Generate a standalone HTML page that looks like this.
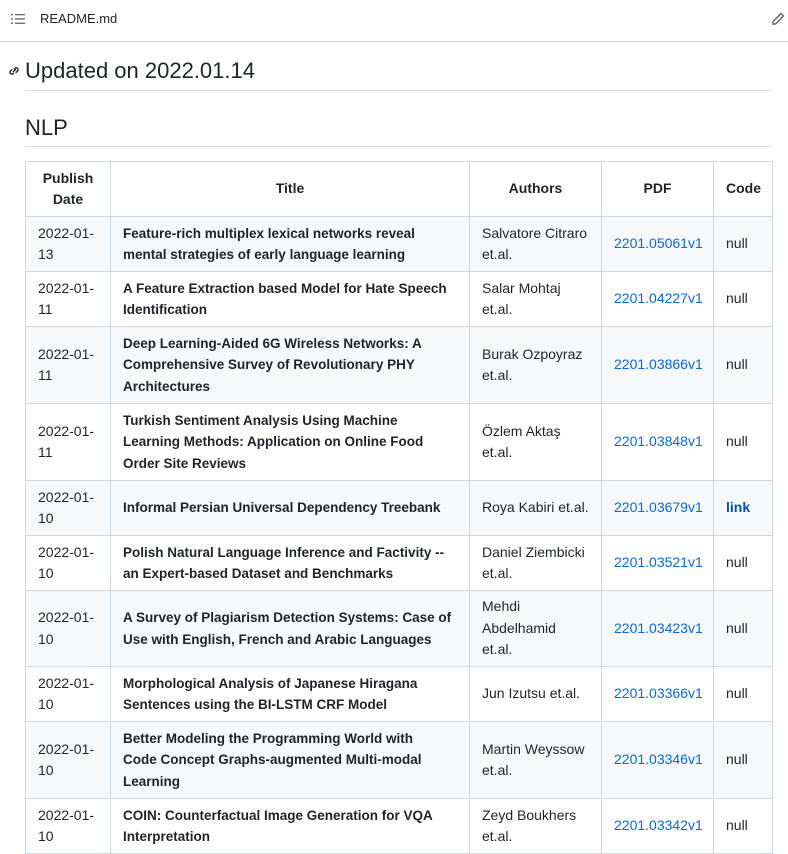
<!DOCTYPE html>
<html><head><meta charset="utf-8"><style>
body{margin:0;background:#fff;font-family:"Liberation Sans",sans-serif;color:#1f2328;width:788px;height:850px;overflow:hidden;position:relative}
.top{height:41px;border-bottom:1px solid #d0d7de;position:relative}
.top .name{position:absolute;left:40px;top:11px;font-size:13px}
.top .ic{position:absolute;left:11px;top:13px}
.top .pen{position:absolute;right:2px;top:11px}
h2{position:absolute;left:25px;top:56px;margin:0;font-size:22px;font-weight:400;width:747px;border-bottom:1px solid #d8dee4;height:34px;line-height:30px}
.lk{position:absolute;left:7px;top:64px}
h3{position:absolute;left:25px;top:113px;margin:0;font-size:22px;font-weight:400;width:747px;border-bottom:1px solid #d8dee4;height:33px;line-height:30px}
table{position:absolute;left:25px;top:161px;border-collapse:collapse;table-layout:fixed;font-size:14px;line-height:21.5px;width:747px}
td,th{border:1px solid #d0d7de;padding:0 12px;vertical-align:middle}
th{font-weight:600;text-align:center}
td:nth-child(2){font-weight:600;font-size:13.5px}
td:nth-child(4){text-align:center}
tr:nth-child(even) td{background:#f6f8fa}
a{color:#0969da;text-decoration:none}
</style></head><body>
<div class="top"><svg class="ic" width="14" height="12" viewBox="0 0 14 12" fill="#59636e"><rect x="0" y="1" width="2" height="1.3"/><rect x="4" y="1" width="10" height="1.3"/><rect x="0" y="5.3" width="2" height="1.3"/><rect x="4" y="5.3" width="10" height="1.3"/><rect x="0" y="9.6" width="2" height="1.3"/><rect x="4" y="9.6" width="10" height="1.3"/></svg><span class="name">README.md</span>
<svg class="pen" width="16" height="16" viewBox="0 0 16 16" fill="none" stroke="#59636e" stroke-width="1.4"><path d="M11 2.5l2.5 2.5L5.5 13H3v-2.5z"/></svg></div>
<svg class="lk" width="14" height="14" viewBox="0 0 16 16" fill="none" stroke="#1f2328" stroke-width="1.6"><path d="M7 9l3-3M6 6L4 8a2 2 0 003 3l1-1M10 10l2-2a2 2 0 00-3-3l-1 1"/></svg>
<h2>Updated on 2022.01.14</h2>
<h3>NLP</h3>
<table>
<colgroup><col style="width:85px"><col style="width:359px"><col style="width:132px"><col style="width:112px"><col style="width:59px"></colgroup>
<tr style="height:55px"><th>Publish Date</th><th>Title</th><th>Authors</th><th>PDF</th><th>Code</th></tr>
<tr style="height:55px"><td>2022-01-13</td><td>Feature-rich multiplex lexical networks reveal mental strategies of early language learning</td><td>Salvatore Citraro et.al.</td><td><a>2201.05061v1</a></td><td>null</td></tr>
<tr style="height:55px"><td>2022-01-11</td><td>A Feature Extraction based Model for Hate Speech Identification</td><td>Salar Mohtaj et.al.</td><td><a>2201.04227v1</a></td><td>null</td></tr>
<tr style="height:77px"><td>2022-01-11</td><td>Deep Learning-Aided 6G Wireless Networks: A Comprehensive Survey of Revolutionary PHY Architectures</td><td>Burak Ozpoyraz et.al.</td><td><a>2201.03866v1</a></td><td>null</td></tr>
<tr style="height:77px"><td>2022-01-11</td><td>Turkish Sentiment Analysis Using Machine Learning Methods: Application on Online Food Order Site Reviews</td><td>Özlem Aktaş et.al.</td><td><a>2201.03848v1</a></td><td>null</td></tr>
<tr style="height:55px"><td>2022-01-10</td><td>Informal Persian Universal Dependency Treebank</td><td>Roya Kabiri et.al.</td><td><a>2201.03679v1</a></td><td><a style="font-weight:600;color:#0550ae">link</a></td></tr>
<tr style="height:55px"><td>2022-01-10</td><td>Polish Natural Language Inference and Factivity -- an Expert-based Dataset and Benchmarks</td><td>Daniel Ziembicki et.al.</td><td><a>2201.03521v1</a></td><td>null</td></tr>
<tr style="height:76px"><td>2022-01-10</td><td>A Survey of Plagiarism Detection Systems: Case of Use with English, French and Arabic Languages</td><td>Mehdi Abdelhamid et.al.</td><td><a>2201.03423v1</a></td><td>null</td></tr>
<tr style="height:55px"><td>2022-01-10</td><td>Morphological Analysis of Japanese Hiragana Sentences using the BI-LSTM CRF Model</td><td>Jun Izutsu et.al.</td><td><a>2201.03366v1</a></td><td>null</td></tr>
<tr style="height:77px"><td>2022-01-10</td><td>Better Modeling the Programming World with<br>Code Concept Graphs-augmented Multi-modal<br>Learning</td><td>Martin Weyssow et.al.</td><td><a>2201.03346v1</a></td><td>null</td></tr>
<tr style="height:55px"><td>2022-01-10</td><td>COIN: Counterfactual Image Generation for VQA Interpretation</td><td>Zeyd Boukhers et.al.</td><td><a>2201.03342v1</a></td><td>null</td></tr>
</table>
</body></html>
